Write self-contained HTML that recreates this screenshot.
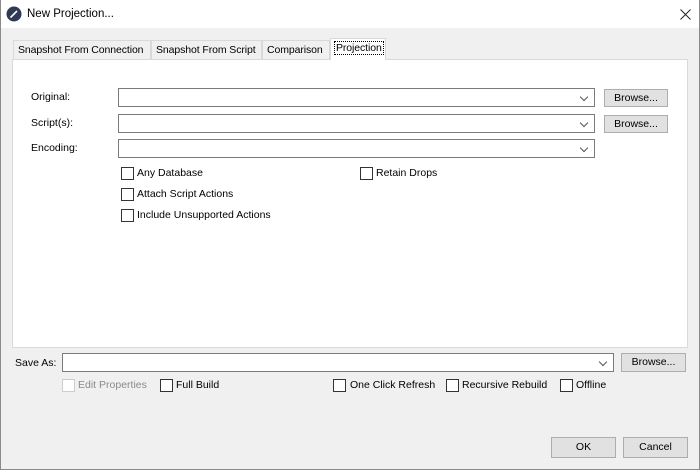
<!DOCTYPE html>
<html><head><style>
*{box-sizing:border-box;margin:0;padding:0}
body{width:700px;height:470px;background:#f0f0f0;font-family:"Liberation Sans",sans-serif;font-size:10.5px;color:#000;position:relative;overflow:hidden}
.a{position:absolute}
.win{left:0;top:0;width:700px;height:470px;border:1px solid #8a8a8a;border-top:none}
.title{left:0;top:0;width:699px;height:28px;background:#fff}
.combo{position:absolute;background:#fff;border:1px solid #7a7a7a;height:19px}
.combo:after{content:"";position:absolute;right:7px;top:5px;width:5px;height:5px;border-right:1px solid #555;border-bottom:1px solid #555;transform:rotate(45deg)}
.btn{position:absolute;background:#e1e1e1;border:1px solid #adadad;text-align:center;line-height:16px}
.cb{position:absolute;width:13px;height:13px;border:1px solid #333;background:#fff}
.t{position:absolute;white-space:nowrap}
.tab{position:absolute;top:40px;height:19px;border:1px solid #d9d9d9;border-bottom:none;background:#f0f0f0;line-height:18px;padding-left:4px;white-space:nowrap;overflow:hidden;letter-spacing:-0.1px}
</style></head><body>
<div class="a title"></div>
<div class="a win"></div>
<svg class="a" style="left:6px;top:6px" width="16" height="16"><circle cx="8" cy="8" r="7.5" fill="#2f3b55"/><path d="M4.5 11.5 L11 5" stroke="#fff" stroke-width="1.6"/></svg>
<div class="t" style="left:27px;top:8px;font-size:11.5px">New Projection...</div>
<svg class="a" style="left:680px;top:9px" width="11" height="11"><path d="M0.5 0.5 L10.5 10.5 M10.5 0.5 L0.5 10.5" stroke="#222" stroke-width="1"/></svg>

<div class="a" style="left:12px;top:59px;width:676px;height:289px;background:#fff;border:1px solid #d9d9d9"></div>
<div class="tab" style="left:13px;width:138px">Snapshot From Connection</div>
<div class="tab" style="left:151px;width:111px">Snapshot From Script</div>
<div class="tab" style="left:262px;width:68px">Comparison</div>
<div class="tab" style="left:330px;top:38px;height:22px;width:56px;background:#fff;padding-left:3px"><span style="border:1px dotted #000;padding:0 1px">Projection</span></div>

<div class="t" style="left:31px;top:91px">Original:</div>
<div class="combo" style="left:118px;top:88px;width:477px"></div>
<div class="btn" style="left:604px;top:89px;width:64px;height:18px">Browse...</div>
<div class="t" style="left:31px;top:117px">Script(s):</div>
<div class="combo" style="left:118px;top:114px;width:477px"></div>
<div class="btn" style="left:604px;top:115px;width:64px;height:18px">Browse...</div>
<div class="t" style="left:31px;top:142px">Encoding:</div>
<div class="combo" style="left:118px;top:139px;width:477px"></div>

<div class="cb" style="left:121px;top:167px"></div><div class="t" style="left:137px;top:167px">Any Database</div>
<div class="cb" style="left:360px;top:167px"></div><div class="t" style="left:376px;top:167px">Retain Drops</div>
<div class="cb" style="left:121px;top:188px"></div><div class="t" style="left:137px;top:188px">Attach Script Actions</div>
<div class="cb" style="left:121px;top:209px"></div><div class="t" style="left:137px;top:209px">Include Unsupported Actions</div>

<div class="t" style="left:15px;top:357px">Save As:</div>
<div class="combo" style="left:62px;top:353px;width:552px"></div>
<div class="btn" style="left:621px;top:353px;width:65px;height:19px">Browse...</div>

<div class="cb" style="left:62px;top:379px;border-color:#ccc"></div><div class="t" style="left:78px;top:379px;color:#8a8a8a">Edit Properties</div>
<div class="cb" style="left:160px;top:379px"></div><div class="t" style="left:176px;top:379px">Full Build</div>
<div class="cb" style="left:333px;top:379px"></div><div class="t" style="left:350px;top:379px">One Click Refresh</div>
<div class="cb" style="left:446px;top:379px"></div><div class="t" style="left:462px;top:379px">Recursive Rebuild</div>
<div class="cb" style="left:560px;top:379px"></div><div class="t" style="left:576px;top:379px">Offline</div>

<div class="btn" style="left:551px;top:437px;width:65px;height:21px;line-height:19px">OK</div>
<div class="btn" style="left:623px;top:437px;width:65px;height:21px;line-height:19px">Cancel</div>
</body></html>
